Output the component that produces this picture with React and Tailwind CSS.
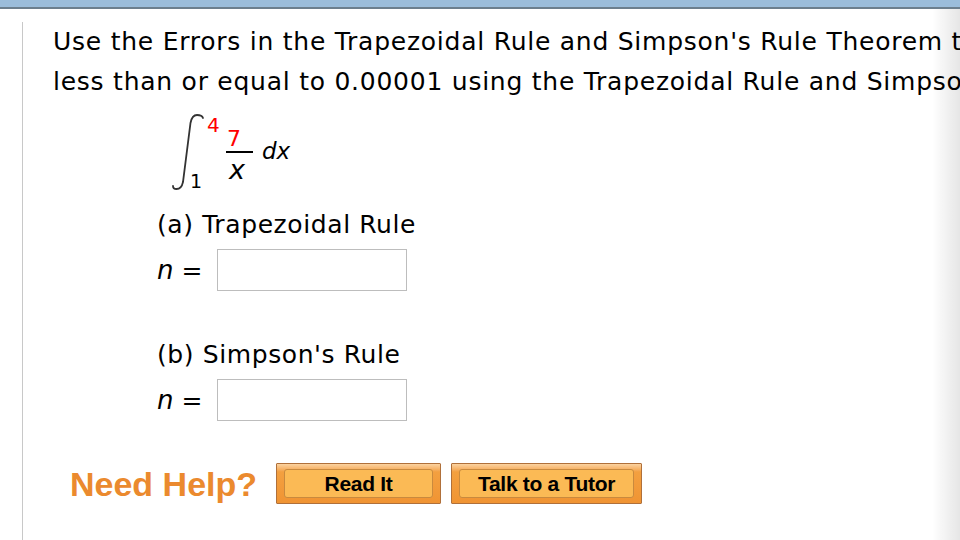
export default function App() {
    return (
        <div className="relative h-[540px] w-[960px] overflow-hidden bg-white">
            <div className="h-[7px] bg-[#9bbddb]" />
            <div className="h-[2px] bg-[#6c7f8e]" />

            <div className="ml-[22px] h-[531px] border-l border-[#c8c8c8] pl-[30px] font-['DejaVu_Sans',sans-serif] text-black">
                <div className="mt-[13px] whitespace-nowrap text-[25px] leading-[40px] tracking-[0.75px]">
                    <p>Use the Errors in the Trapezoidal Rule and Simpson's Rule Theorem to find n</p>
                    <p>less than or equal to 0.00001 using the Trapezoidal Rule and Simpson's Rule.</p>
                </div>

                <Integral />

                <section className="ml-[104px] mt-[17px]">
                    <p className="text-[25px] leading-[32px] tracking-[0.6px]">(a) Trapezoidal Rule</p>
                    <AnswerRow />
                </section>

                <section className="ml-[104px] mt-[48px]">
                    <p className="text-[25px] leading-[32px] tracking-[0.6px]">(b) Simpson's Rule</p>
                    <AnswerRow />
                </section>

                <div className="ml-[17px] mt-[42px] flex items-center gap-[10px]">
                    <span className="mr-[9px] font-['Liberation_Sans',sans-serif] text-[34px] font-bold leading-none text-[#eb8a2e]">
                        Need Help?
                    </span>
                    <HelpButton label="Read It" width="w-[165px]" />
                    <HelpButton label="Talk to a Tutor" width="w-[191px]" />
                </div>
            </div>

            <div className="pointer-events-none absolute right-0 top-[9px] h-[531px] w-[28px] bg-gradient-to-r from-transparent to-black/10" />
        </div>
    );
}

function Integral() {
    return (
        <div className="relative ml-[117px] mt-[10px] h-[80px] w-[130px]">
            <svg className="absolute left-0 top-0" width="40" height="80" viewBox="0 0 40 80">
                <path
                    d="M33 6 Q32 3 27 3 Q22 3 20.5 11 L13 70 Q11.5 77 6.5 77 Q3 77 3 74"
                    fill="none"
                    stroke="#333"
                    strokeWidth="1.8"
                    strokeLinecap="round"
                />
            </svg>
            <span className="absolute left-[37px] top-[3px] text-[20px] leading-none text-[#f00]">4</span>
            <span className="absolute left-[20px] top-[60px] text-[19px] leading-none">1</span>
            <span className="absolute left-[57px] top-[16px] text-[22px] leading-none text-[#f00]">7</span>
            <div className="absolute left-[56px] top-[39px] h-[2px] w-[27px] bg-black" />
            <span className="absolute left-[59px] top-[44px] text-[27px] italic leading-none">x</span>
            <span className="absolute left-[92px] top-[28px] text-[23px] italic leading-none">dx</span>
        </div>
    );
}

function AnswerRow() {
    return (
        <div className="mt-[8px] flex items-center">
            <span className="w-[60px] text-[25px]">
                <span className="text-[26px] italic">n</span> =
            </span>
            <input
                type="text"
                className="h-[42px] w-[190px] border border-[#bdbdbd] bg-white outline-none"
            />
        </div>
    );
}

function HelpButton({ label, width }) {
    return (
        <button
            className={`flex h-[41px] ${width} items-center rounded-[1px] border border-[#b0703a] bg-gradient-to-b from-[#fbd3a0] via-[#f3a040] via-20% to-[#f09433] px-[7px] py-[5px]`}
        >
            <span className="flex h-full w-full items-center justify-center rounded-[3px] border border-[#c98a3e] bg-[#fbba55] font-['Liberation_Sans',sans-serif] text-[21px] font-bold leading-none tracking-[-0.3px] text-black">
                {label}
            </span>
        </button>
    );
}
